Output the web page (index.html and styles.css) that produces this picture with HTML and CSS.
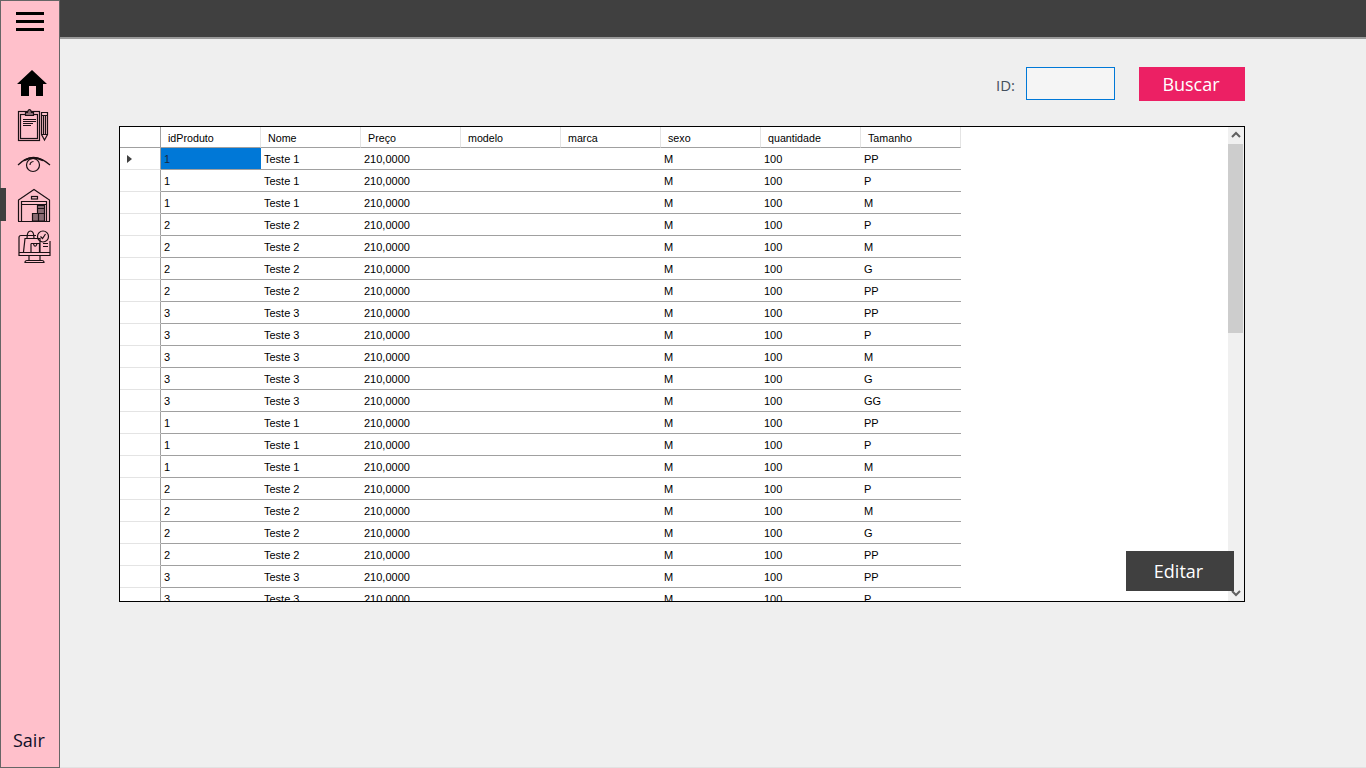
FILE: index.html
```html
<!DOCTYPE html>
<html lang="pt">
<head>
<meta charset="utf-8">
<title>Produtos</title>
<link rel="stylesheet" href="styles.css">
</head>
<body>
<div class="app">
  <aside class="sidebar">
    <div class="menu-toggle"><span></span><span></span><span></span></div>
    <nav class="nav">
      <svg class="nav-icon" viewBox="1 63 58 41"><path class="solid" d="M32 70 47 84H43V96H36V86H29V96H21V84H17Z"/></svg>
      <svg class="nav-icon" viewBox="1 104 58 41"><g class="line">
        <rect x="18.5" y="111.5" width="21" height="29"/><rect x="20.5" y="114.5" width="17" height="24"/>
        <path class="fill-clip" d="M25.5 115.5V112.5H27.5Q28 109.5 29.5 109.5Q31 109.5 31.5 112.5H33.5V115.5Z"/>
        <path d="M23 119.5H36M23 121.5H36M23 123.5H33M23 125.5H31"/>
        <path d="M41.5 112.5H47.5V134.5L44.5 140 41.5 134.5ZM41.5 115.5H47.5M43.5 115.5V134M45.5 115.5V134M41.5 134.5H47.5"/>
      </g></svg>
      <svg class="nav-icon" viewBox="1 145 58 41"><g class="line">
        <path d="M18 165Q33 150 50 165"/>
        <path class="heavy" d="M24 160.500Q33 155.500 43 160.500"/>
        <circle cx="33" cy="165" r="6.500"/><path d="M30 165Q30 162 33.500 161.500"/>
      </g></svg>
      <div class="nav-active">
        <span class="nav-marker"></span>
        <svg class="nav-icon" viewBox="1 186 58 41"><g class="line">
          <path d="M18.500 221V200L34 189.500 49.500 200V221"/>
          <path d="M21.500 221V201.500H46.500V221M21.500 204.500H46.500M18 221.500H50"/>
          <rect x="31.500" y="196.500" width="6" height="2.500"/>
          <path class="fill-box" d="M37.500 213.500V205.500H44.500V213.500Z"/>
          <path class="fill-box" d="M32.500 221V213.500H44.500V221Z"/>
          <path d="M38.500 213.500V221M37.500 208.500H44.500"/>
        </g></svg>
      </div>
      <svg class="nav-icon" viewBox="1 227 58 41"><g class="line">
        <path d="M36 235.500H21Q19 235.500 19 237.500V255.500H50V241"/>
        <path d="M19 252.500H50M29 255.500V260.500M40 255.500V260.500M25 262.500Q25 260.500 27 260.500H42Q44 260.500 44 262.500Z"/>
        <circle cx="43" cy="236.500" r="5.500"/><path d="M40.500 236.500 42.500 238.500 45.500 234"/>
        <path d="M23.500 252 25 238.500H40V252M27 238.500Q27 231 30.500 231Q34 231 34 238.500M31 243.500H39.500V252M31 243.500V252M33.500 244Q35 248.500 37 244M43 243.500H48M43 246.500H48"/>
      </g></svg>
    </nav>
    <div class="logout">Sair</div>
  </aside>
  <div class="workspace">
    <header class="topbar"></header>
    <main class="content">
      <div class="search">
        <label class="search-label" for="id-field">ID:</label>
        <input class="search-input" id="id-field" type="text">
        <button class="search-button" type="button">Buscar</button>
      </div>
      <section class="grid-panel">
        <div class="grid-view">
          <table class="grid">
            <thead>
              <tr><th class="corner"></th><th>idProduto</th><th>Nome</th><th>Preço</th><th>modelo</th><th>marca</th><th>sexo</th><th>quantidade</th><th>Tamanho</th></tr>
            </thead>
            <tbody>
              <tr><td class="head current"></td><td class="selected">1</td><td>Teste 1</td><td>210,0000</td><td></td><td></td><td>M</td><td>100</td><td>PP</td></tr>
              <tr><td class="head"></td><td>1</td><td>Teste 1</td><td>210,0000</td><td></td><td></td><td>M</td><td>100</td><td>P</td></tr>
              <tr><td class="head"></td><td>1</td><td>Teste 1</td><td>210,0000</td><td></td><td></td><td>M</td><td>100</td><td>M</td></tr>
              <tr><td class="head"></td><td>2</td><td>Teste 2</td><td>210,0000</td><td></td><td></td><td>M</td><td>100</td><td>P</td></tr>
              <tr><td class="head"></td><td>2</td><td>Teste 2</td><td>210,0000</td><td></td><td></td><td>M</td><td>100</td><td>M</td></tr>
              <tr><td class="head"></td><td>2</td><td>Teste 2</td><td>210,0000</td><td></td><td></td><td>M</td><td>100</td><td>G</td></tr>
              <tr><td class="head"></td><td>2</td><td>Teste 2</td><td>210,0000</td><td></td><td></td><td>M</td><td>100</td><td>PP</td></tr>
              <tr><td class="head"></td><td>3</td><td>Teste 3</td><td>210,0000</td><td></td><td></td><td>M</td><td>100</td><td>PP</td></tr>
              <tr><td class="head"></td><td>3</td><td>Teste 3</td><td>210,0000</td><td></td><td></td><td>M</td><td>100</td><td>P</td></tr>
              <tr><td class="head"></td><td>3</td><td>Teste 3</td><td>210,0000</td><td></td><td></td><td>M</td><td>100</td><td>M</td></tr>
              <tr><td class="head"></td><td>3</td><td>Teste 3</td><td>210,0000</td><td></td><td></td><td>M</td><td>100</td><td>G</td></tr>
              <tr><td class="head"></td><td>3</td><td>Teste 3</td><td>210,0000</td><td></td><td></td><td>M</td><td>100</td><td>GG</td></tr>
              <tr><td class="head"></td><td>1</td><td>Teste 1</td><td>210,0000</td><td></td><td></td><td>M</td><td>100</td><td>PP</td></tr>
              <tr><td class="head"></td><td>1</td><td>Teste 1</td><td>210,0000</td><td></td><td></td><td>M</td><td>100</td><td>P</td></tr>
              <tr><td class="head"></td><td>1</td><td>Teste 1</td><td>210,0000</td><td></td><td></td><td>M</td><td>100</td><td>M</td></tr>
              <tr><td class="head"></td><td>2</td><td>Teste 2</td><td>210,0000</td><td></td><td></td><td>M</td><td>100</td><td>P</td></tr>
              <tr><td class="head"></td><td>2</td><td>Teste 2</td><td>210,0000</td><td></td><td></td><td>M</td><td>100</td><td>M</td></tr>
              <tr><td class="head"></td><td>2</td><td>Teste 2</td><td>210,0000</td><td></td><td></td><td>M</td><td>100</td><td>G</td></tr>
              <tr><td class="head"></td><td>2</td><td>Teste 2</td><td>210,0000</td><td></td><td></td><td>M</td><td>100</td><td>PP</td></tr>
              <tr><td class="head"></td><td>3</td><td>Teste 3</td><td>210,0000</td><td></td><td></td><td>M</td><td>100</td><td>PP</td></tr>
              <tr><td class="head"></td><td>3</td><td>Teste 3</td><td>210,0000</td><td></td><td></td><td>M</td><td>100</td><td>P</td></tr>
            </tbody>
          </table>
        </div>
        <div class="scrollbar">
          <svg class="scroll-arrow" viewBox="0 0 16 17"><path d="M4 10 8 6 12 10"/></svg>
          <div class="scroll-track"><div class="scroll-thumb"></div></div>
          <svg class="scroll-arrow" viewBox="0 0 16 17"><path d="M4 7 8 11 12 7"/></svg>
        </div>
        <button class="edit-button" type="button">Editar</button>
      </section>
    </main>
  </div>
</div>
</body>
</html>
```
FILE: styles.css
```css
* { box-sizing: border-box; }
html, body { margin: 0; height: 100%; overflow: hidden; }
body { background: #efefef; font-family: "Open Sans", "Liberation Sans", sans-serif; }
.app { display: flex; width: 1366px; height: 768px; }

.sidebar {
  width: 60px; flex: none; display: flex; flex-direction: column;
  background: #ffc0cb; border: 1px solid #666;
}
.menu-toggle { display: flex; flex-direction: column; gap: 5px; padding: 11px 15px 0; height: 62px; }
.menu-toggle span { display: block; height: 3px; background: #000; }
.nav { display: flex; flex-direction: column; flex: 1; }
.nav-icon { display: block; width: 58px; height: 41px; flex: none; }
.nav-active { position: relative; height: 41px; }
.nav-marker { position: absolute; left: -1px; top: 2px; width: 6px; height: 33px; background: #404040; }
.solid { fill: #000; }
.line { fill: none; stroke: #1a1014; stroke-width: 1.2; }
.heavy { stroke-width: 1.8; }
.fill-clip { fill: #8a6a72; }
.fill-box { fill: #8a6a72; }
.logout { height: 52px; padding-left: 12px; font-size: 18px; line-height: 24px; padding-top: 13px; color: #101028; }

.workspace { flex: 1; display: flex; flex-direction: column; min-width: 0; }
.topbar { height: 39px; flex: none; background: #404040; border-bottom: 2px solid #9a9a9a; }
.content { flex: 1; padding: 28px 121px 0 59px; border-bottom: 1px solid #e2e2e2; }

.search { display: flex; align-items: flex-start; justify-content: flex-end; height: 34px; margin-bottom: 25px; }
.search-label { font-size: 15px; line-height: 36px; color: #44505c; margin-right: 11px; }
.search-input {
  width: 89px; height: 33px; margin: 0 24px 0 0; padding: 0;
  background: #f5f5f5; border: 1px solid #0078d7; border-radius: 0; outline: 0;
}
.search-button {
  width: 106px; height: 34px; padding: 0 2px 0 0; border: 0; background: #ec2064; color: #fff;
  font: 18px/34px "Open Sans", "Liberation Sans", sans-serif;
}

.grid-panel { position: relative; display: flex; height: 476px; background: #fff; border: 1px solid #000; overflow: hidden; }
.grid-view { flex: 1; min-width: 0; overflow: hidden; }
.grid { table-layout: fixed; width: 841px; border-collapse: separate; border-spacing: 0; font: 11px/14px "Liberation Sans", Arial, sans-serif; color: #000; }
.grid th, .grid td { width: 100px; padding: 0; overflow: hidden; white-space: nowrap; text-align: left; font-weight: 400; }
.grid th:first-child, .grid td:first-child { width: 41px; }
.grid th { height: 21px; padding: 1px 0 0 7px; font-size: 10.7px; border-right: 1px solid #e4e4e4; border-bottom: 1px solid #a0a0a0; }
.grid th.corner { border-right: 1px solid #a0a0a0; padding: 0; }
.grid td { height: 22px; padding-left: 3px; border-bottom: 1px solid #a0a0a0; }
.grid td.head { position: relative; padding: 0; border-right: 1px solid #a0a0a0; border-bottom: 1px solid #e4e4e4; }
.grid td.selected { background: #0078d7; color: #1a2a40; }
.current::after {
  content: ""; position: absolute; left: 7px; top: 7px;
  border-left: 5px solid #404040; border-top: 4.500px solid transparent; border-bottom: 4.500px solid transparent;
}

.scrollbar { width: 16px; flex: none; display: flex; flex-direction: column; background: #f0f0f0; }
.scroll-arrow { display: block; width: 16px; height: 17px; flex: none; fill: none; stroke: #606060; stroke-width: 2; }
.scroll-track { flex: 1; min-height: 0; }
.scroll-thumb { height: 189px; width: 15px; background: #cdcdcd; }

.edit-button {
  position: absolute; left: 1006px; top: 424px; width: 108px; height: 40px; padding: 0 3px 0 0; border: 0;
  background: #404040; color: #fff; font: 18px/40px "Open Sans", "Liberation Sans", sans-serif;
}
```
